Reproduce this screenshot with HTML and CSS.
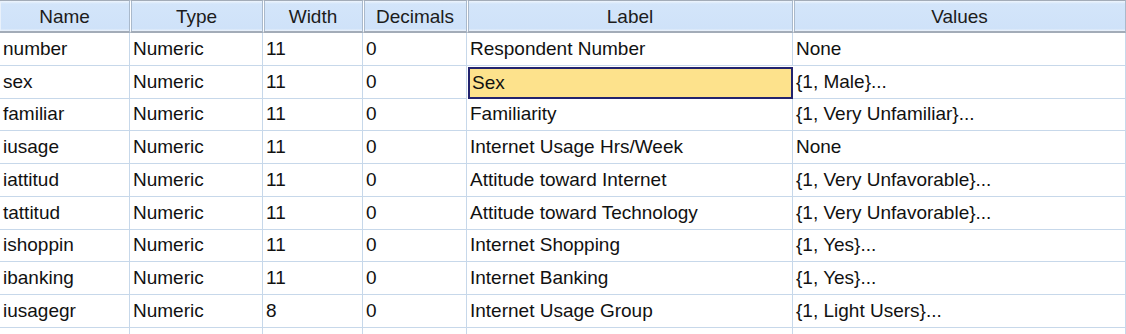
FILE: index.html
```html
<!DOCTYPE html>
<html>
<head>
<meta charset="utf-8">
<link rel="stylesheet" href="styles.css">
</head>
<body>
<div class="grid">
  <div class="hd">Name</div><div class="hd">Type</div><div class="hd">Width</div><div class="hd">Decimals</div><div class="hd">Label</div><div class="hd">Values</div>

  <div class="c">number</div><div class="c">Numeric</div><div class="c">11</div><div class="c">0</div><div class="c">Respondent Number</div><div class="c">None</div>
  <div class="c">sex</div><div class="c">Numeric</div><div class="c">11</div><div class="c">0</div><div class="c sel">Sex</div><div class="c">{1, Male}...</div>
  <div class="c">familiar</div><div class="c">Numeric</div><div class="c">11</div><div class="c">0</div><div class="c">Familiarity</div><div class="c">{1, Very Unfamiliar}...</div>
  <div class="c">iusage</div><div class="c">Numeric</div><div class="c">11</div><div class="c">0</div><div class="c">Internet Usage Hrs/Week</div><div class="c">None</div>
  <div class="c">iattitud</div><div class="c">Numeric</div><div class="c">11</div><div class="c">0</div><div class="c">Attitude toward Internet</div><div class="c">{1, Very Unfavorable}...</div>
  <div class="c">tattitud</div><div class="c">Numeric</div><div class="c">11</div><div class="c">0</div><div class="c">Attitude toward Technology</div><div class="c">{1, Very Unfavorable}...</div>
  <div class="c">ishoppin</div><div class="c">Numeric</div><div class="c">11</div><div class="c">0</div><div class="c">Internet Shopping</div><div class="c">{1, Yes}...</div>
  <div class="c">ibanking</div><div class="c">Numeric</div><div class="c">11</div><div class="c">0</div><div class="c">Internet Banking</div><div class="c">{1, Yes}...</div>
  <div class="c">iusagegr</div><div class="c">Numeric</div><div class="c">8</div><div class="c">0</div><div class="c">Internet Usage Group</div><div class="c">{1, Light Users}...</div>
  <div class="c stub"></div><div class="c stub"></div><div class="c stub"></div><div class="c stub"></div><div class="c stub"></div><div class="c stub"></div>
</div>
</body>
</html>
```
FILE: styles.css
```css
html, body {
  margin: 0;
  padding: 0;
  background: #ffffff;
  overflow: hidden;
}
body {
  width: 1126px;
  height: 334px;
  font-family: "Liberation Sans", Arial, sans-serif;
  font-size: 19px;
  color: #111111;
}
.grid {
  display: grid;
  height: 334px;
  overflow: hidden;
  grid-template-columns: 130px 133px 100px 104px 326px 333px;
  grid-template-rows: 33px repeat(9, 32.75px) 1fr;
}
.hd {
  box-sizing: border-box;
  background: linear-gradient(#eef5fd 0, #d3e5fa 3px, #cfe2f9 28px, #e6effa 29px, #e6effa 30px);
  border-top: 1px solid #a3acb8;
  border-bottom: 2px solid #a3acb8;
  border-left: 1px solid #ffffff;
  border-right: 1px solid #a9b9cc;
  box-shadow: inset 1px 0 0 #a9b9cc;
  display: flex;
  align-items: center;
  justify-content: center;
  padding-top: 1px;
  color: #1c1c1c;
}
.hd:first-child {
  border-left: none;
  box-shadow: inset 1px 0 0 #e9f1fb;
}
.c {
  box-sizing: border-box;
  border-right: 1px solid #c7d8ea;
  border-bottom: 1px solid #c7d8ea;
  padding-left: 3px;
  display: flex;
  align-items: center;
  white-space: nowrap;
  overflow: hidden;
  min-height: 0;
}
.stub {
  border-bottom: none;
}
.sel {
  background: #fde28c;
  border: 2px solid #22236e;
  margin-left: 1px;
  margin-top: 1px;
  padding-left: 2px;
}
```
